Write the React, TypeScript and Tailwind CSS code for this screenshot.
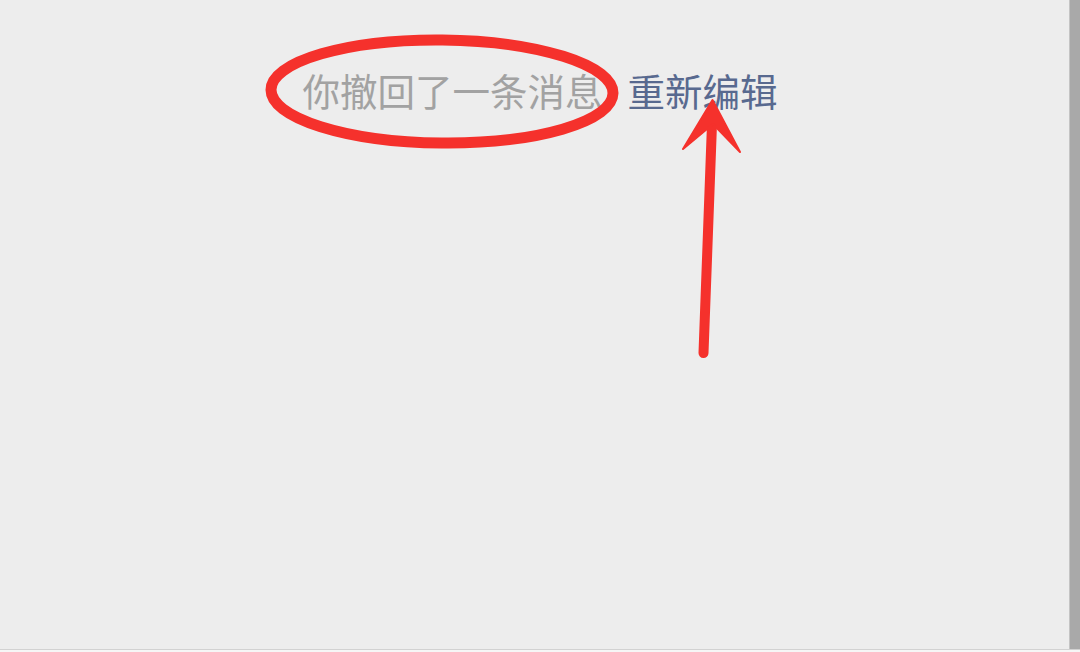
import React from 'react';

const App = () => {
    return (
        <div className="w-[1080px] h-[652px] flex flex-col bg-[#ededed] overflow-hidden">
            <div className="flex-1 flex min-h-0">
                <div className="relative flex-1 flex flex-col">
                    {/* recalled message notice */}
                    <div
                        className="flex justify-center gap-[25px] pt-[71px] pl-[11px] text-[37.5px] leading-[38px] whitespace-nowrap"
                        style={{ fontFamily: '"Noto Sans CJK SC", "Noto Sans", sans-serif' }}
                    >
                        <span className="text-[#a2a2a2]">你撤回了一条消息</span>
                        <span className="text-[#58698f]">重新编辑</span>
                    </div>

                    {/* red annotations over the text */}
                    <svg
                        className="absolute left-0 top-0 pointer-events-none"
                        width="1069"
                        height="649"
                        viewBox="0 0 1069 649"
                    >
                        <ellipse
                            cx="442"
                            cy="91.5"
                            rx="171"
                            ry="51.5"
                            fill="none"
                            stroke="#f5312c"
                            strokeWidth="11"
                            transform="rotate(0.6 442 91.5)"
                        />
                        <line
                            x1="712"
                            y1="124"
                            x2="703.5"
                            y2="353"
                            stroke="#f5312c"
                            strokeWidth="10"
                            strokeLinecap="round"
                        />
                        <polygon
                            points="712.5,100 740,152 713,124 683,149"
                            fill="#f5312c"
                            stroke="#f5312c"
                            strokeWidth="2"
                            strokeLinejoin="round"
                        />
                    </svg>
                </div>
                <div className="w-[11px] bg-[#a9a9a9] border-l border-[#c4c4c4]" />
            </div>
            <div className="h-[3px] bg-[#f6f6f6] border-t border-[#d2d2d2]" />
        </div>
    );
};

export default App;
